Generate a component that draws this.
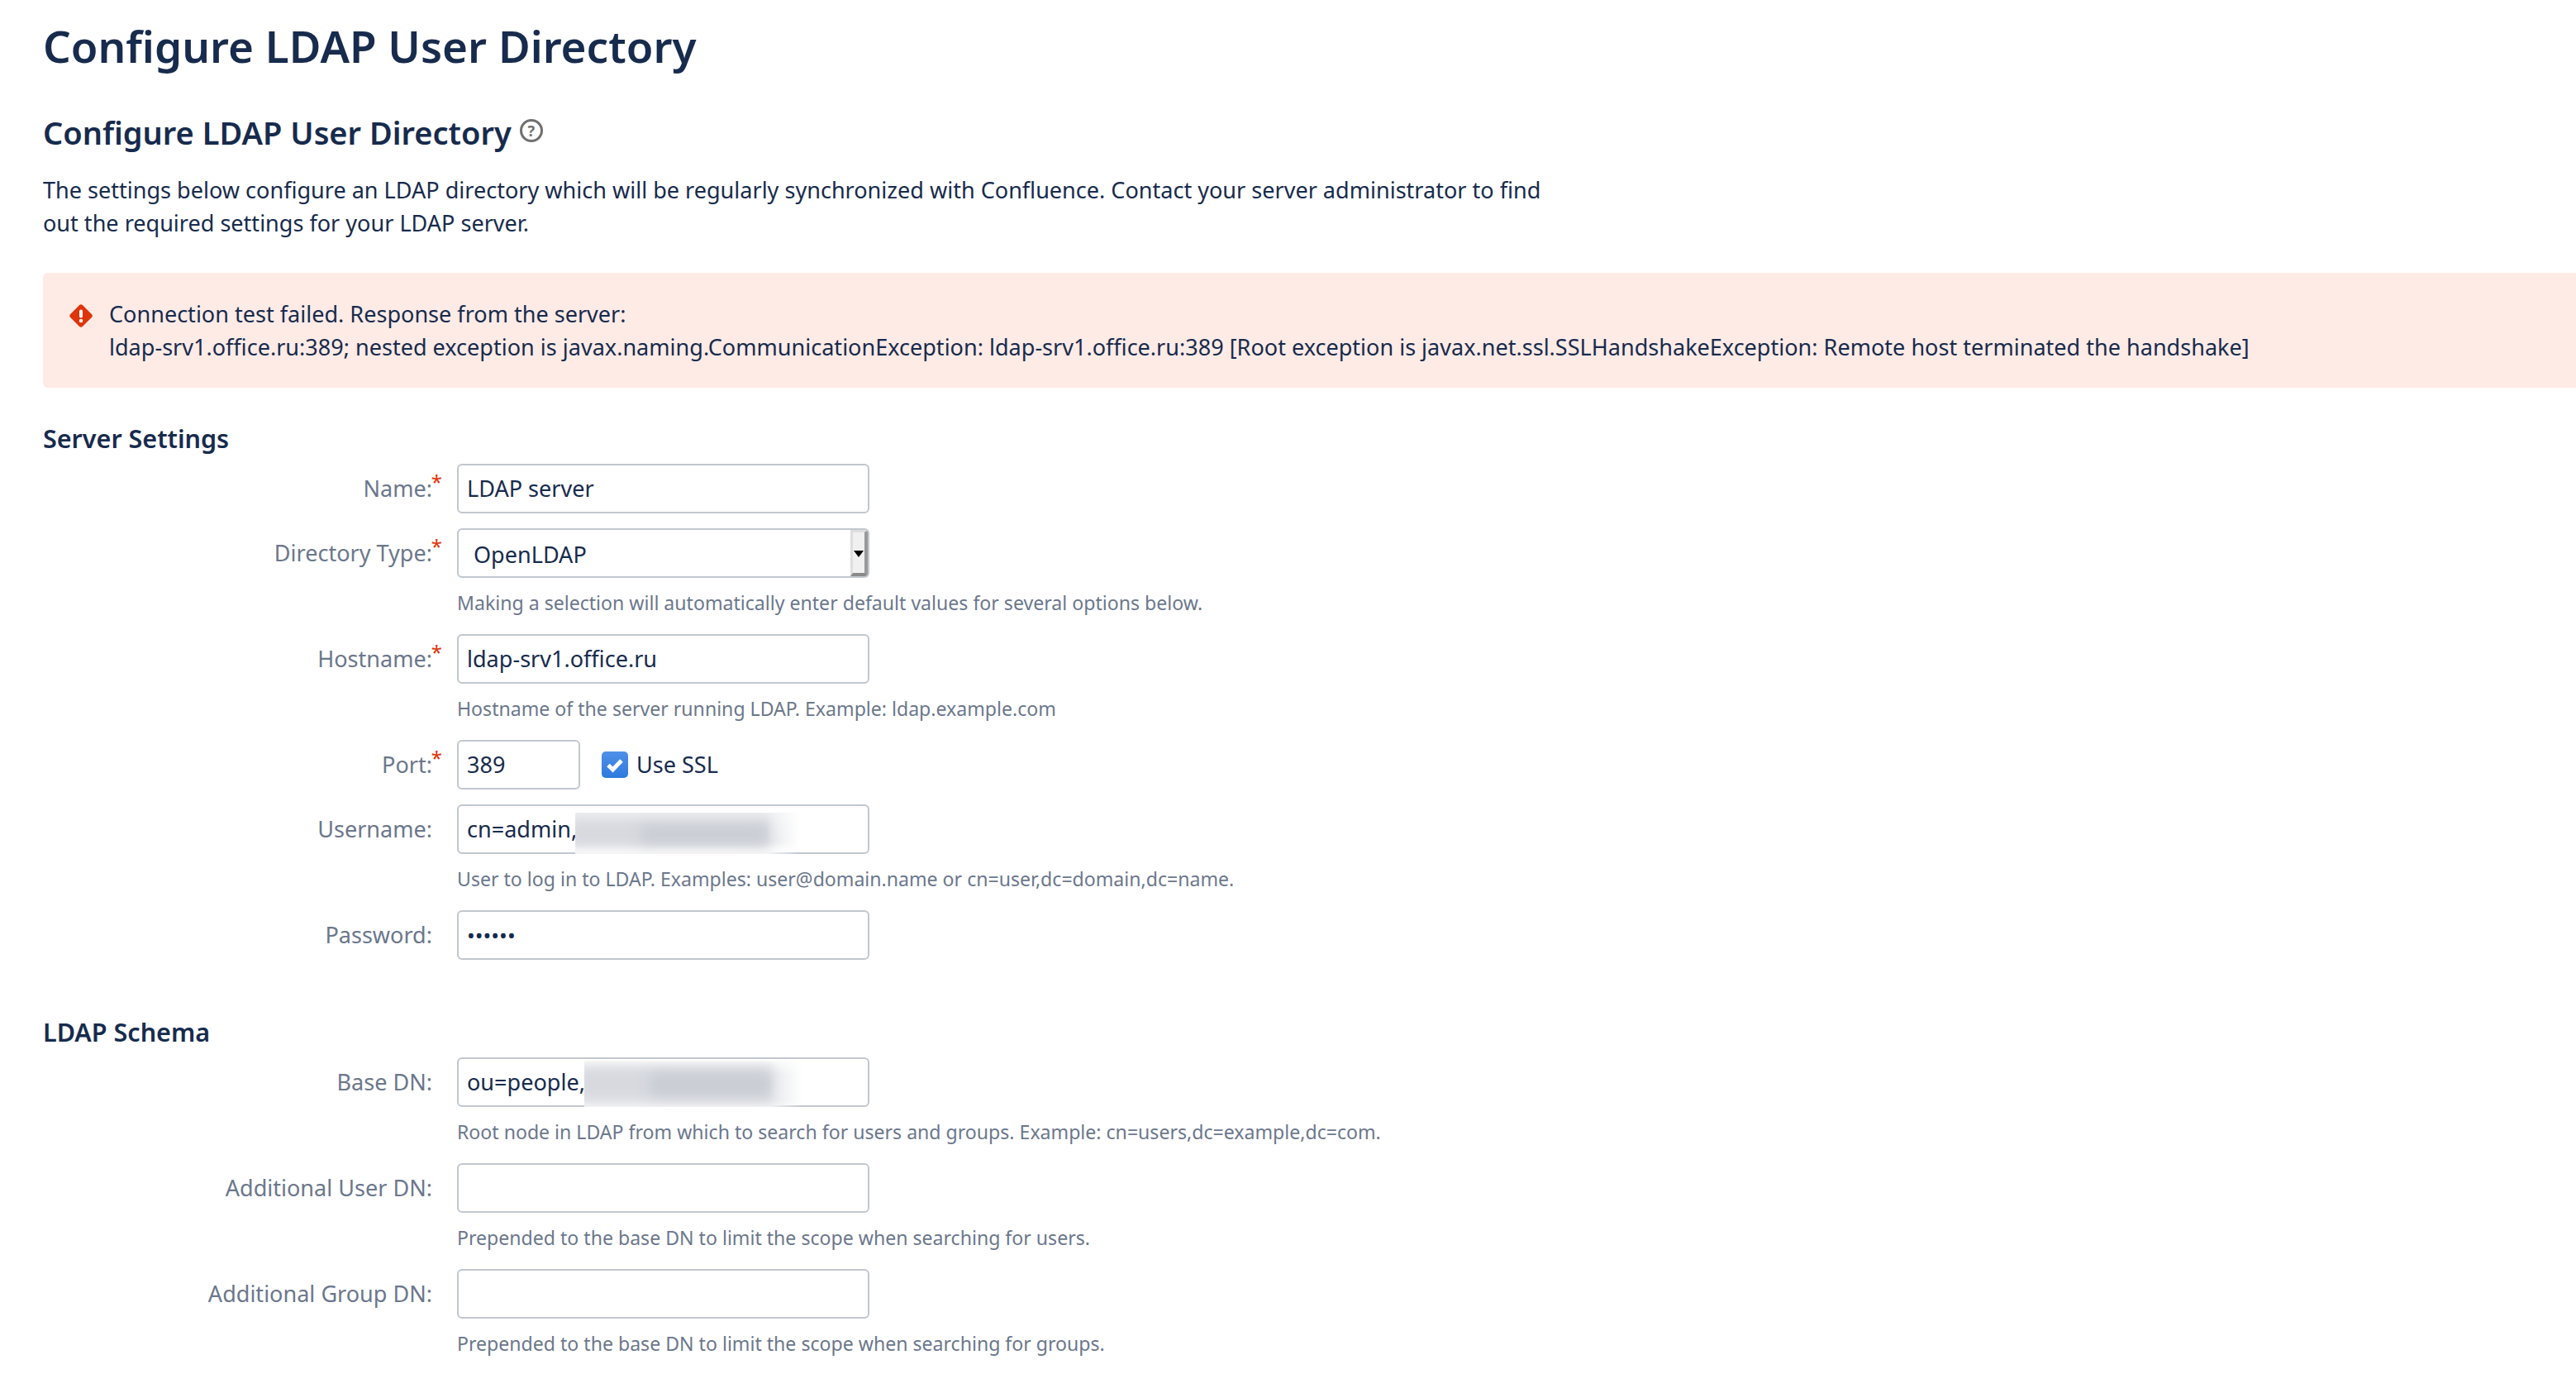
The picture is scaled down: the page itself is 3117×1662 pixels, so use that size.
<div class="page">
  <h1>Configure LDAP User Directory</h1>
  <h2>Configure LDAP User Directory <span class="help-icon">?</span></h2>
  <p class="intro">The settings below configure an LDAP directory which will be regularly synchronized with Confluence. Contact your server administrator to find out the required settings for your LDAP server.</p>

  <div class="alert">
    <svg class="alert-icon" viewBox="0 0 28 28" aria-hidden="true">
      <path d="M11.9 1.2a3 3 0 0 1 4.2 0l10.7 10.7a3 3 0 0 1 0 4.2L16.1 26.8a3 3 0 0 1-4.2 0L1.2 16.1a3 3 0 0 1 0-4.2z" fill="#de350b"/>
      <rect x="12" y="6.5" width="4" height="10" rx="2" fill="#fff"/>
      <circle cx="14" cy="20" r="2.2" fill="#fff"/>
    </svg>
    <div>
      <div>Connection test failed. Response from the server:</div>
      <div>ldap-srv1.office.ru:389; nested exception is javax.naming.CommunicationException: ldap-srv1.office.ru:389 [Root exception is javax.net.ssl.SSLHandshakeException: Remote host terminated the handshake]</div>
    </div>
  </div>

  <h3>Server Settings</h3>

  <div class="field">
    <div class="label">Name:<span class="req">*</span></div>
    <div class="box">LDAP server</div>
  </div>

  <div class="field">
    <div class="label">Directory Type:<span class="req">*</span></div>
    <div class="col">
      <div class="box select">OpenLDAP
        <span class="spin"><span class="arrow"></span></span>
      </div>
      <div class="help">Making a selection will automatically enter default values for several options below.</div>
    </div>
  </div>

  <div class="field">
    <div class="label">Hostname:<span class="req">*</span></div>
    <div class="col">
      <div class="box">ldap-srv1.office.ru</div>
      <div class="help">Hostname of the server running LDAP. Example: ldap.example.com</div>
    </div>
  </div>

  <div class="field">
    <div class="label">Port:<span class="req">*</span></div>
    <div class="box short">389</div>
    <span class="check"><svg viewBox="0 0 32 32" aria-hidden="true"><path d="M8 16.5l5.5 5.5L24 11" fill="none" stroke="#fff" stroke-width="5"/></svg></span>
    <span class="check-label">Use SSL</span>
  </div>

  <div class="field">
    <div class="label">Username:</div>
    <div class="col">
      <div class="box">cn=admin,<span class="redact user"><span class="smear"></span><span class="blob"></span></span></div>
      <div class="help">User to log in to LDAP. Examples: user@domain.name or cn=user,dc=domain,dc=name.</div>
    </div>
  </div>

  <div class="field">
    <div class="label">Password:</div>
    <div class="box dots">••••••</div>
  </div>

  <h3 class="second">LDAP Schema</h3>

  <div class="field">
    <div class="label">Base DN:</div>
    <div class="col">
      <div class="box">ou=people,<span class="redact base"><span class="smear"></span><span class="blob"></span></span></div>
      <div class="help">Root node in LDAP from which to search for users and groups. Example: cn=users,dc=example,dc=com.</div>
    </div>
  </div>

  <div class="field">
    <div class="label">Additional User DN:</div>
    <div class="col">
      <div class="box"></div>
      <div class="help">Prepended to the base DN to limit the scope when searching for users.</div>
    </div>
  </div>

  <div class="field">
    <div class="label">Additional Group DN:</div>
    <div class="col">
      <div class="box"></div>
      <div class="help">Prepended to the base DN to limit the scope when searching for groups.</div>
    </div>
  </div>
</div>

<style>
  :global(body) {
    margin: 0;
    background: #fff;
    overflow: hidden;
  }
  .page {
    box-sizing: border-box;
    height: 1662px;
    overflow: hidden;
    padding: 0 0 0 52px;
    font-family: "Noto Sans", sans-serif;
    font-size: 27.05px;
    line-height: 40px;
    color: #172b4d;
  }
  h1 {
    margin: 0;
    padding-top: 20px;
    height: 72px;
    font-size: 53px;
    line-height: 72px;
    font-weight: 600;
  }
  h2 {
    margin: 40px 0 0;
    height: 56px;
    font-size: 38px;
    line-height: 56px;
    font-weight: 600;
    display: flex;
    align-items: center;
    gap: 10px;
  }
  .help-icon {
    width: 22px;
    height: 22px;
    margin-top: -4px;
    border: 3px solid #707070;
    border-radius: 50%;
    color: #707070;
    font-size: 18px;
    line-height: 22px;
    font-weight: 700;
    text-align: center;
  }
  .intro {
    margin: 22px 0 0;
    width: 1830px;
  }
  .alert {
    margin-top: 40px;
    height: 139px;
    box-sizing: border-box;
    padding: 30px 32px;
    background: #ffebe6;
    border-radius: 6px 0 0 6px;
    display: flex;
    gap: 20px;
    white-space: nowrap;
  }
  .alert-icon {
    width: 28px;
    height: 28px;
    flex: none;
    margin-top: 8px;
  }
  h3 {
    margin: 41px 0 0;
    height: 40px;
    font-size: 30.5px;
    line-height: 40px;
    font-weight: 600;
  }
  h3.second {
    margin-top: 67px;
  }
  .field {
    display: flex;
    align-items: flex-start;
    margin-top: 18px;
  }
  h3 + .field {
    margin-top: 11px;
  }
  .label {
    width: 501px;
    flex: none;
    box-sizing: border-box;
    padding-right: 30px;
    text-align: right;
    color: #6b778c;
    line-height: 60px;
    position: relative;
  }
  .req {
    position: absolute;
    right: 18px;
    top: -8px;
    color: #de350b;
    font-size: 24px;
  }
  .box {
    box-sizing: border-box;
    width: 499px;
    height: 60px;
    border: 2px solid #c1c7d0;
    border-radius: 6px;
    padding: 0 10px;
    line-height: 56px;
    background: #fff;
    white-space: nowrap;
    position: relative;
  }
  .select {
    padding-left: 18px;
    line-height: 60px;
    overflow: hidden;
  }
  .spin {
    position: absolute;
    right: 0;
    top: 0;
    bottom: 0;
    width: 21px;
    background: #f0f0f0;
    border-left: 3px solid #dedede;
    border-top: 3px solid #dedede;
    border-right: 4px solid #999;
    border-bottom: 4px solid #8a8a8a;
    box-sizing: border-box;
  }
  .arrow {
    position: absolute;
    left: 1px;
    top: 22px;
    border: 6px solid transparent;
    border-top: 8px solid #000;
    border-bottom: 0;
  }
  .short {
    width: 149px;
  }
  .dots {
    font-size: 26px;
  }
  .check {
    width: 32px;
    height: 32px;
    margin: 14px 0 0 26px;
    border-radius: 5px;
    background: linear-gradient(#4f90e8, #2f7ade);
    flex: none;
  }
  .check svg {
    display: block;
    width: 32px;
    height: 32px;
  }
  .check-label {
    margin-left: 10px;
    line-height: 60px;
  }
  .help {
    margin-top: 12px;
    height: 38px;
    font-size: 23.1px;
    line-height: 37px;
    color: #6b778c;
    white-space: nowrap;
  }
  .redact {
    position: absolute;
    background: linear-gradient(#edeff1, #e4e6ea 70%, #f8f8f9 88%);
    overflow: hidden;
    mask-image: linear-gradient(to right, #000 85%, transparent);
  }
  .redact.user {
    left: 141px;
    top: 8px;
    width: 272px;
    height: 50px;
  }
  .redact.base {
    left: 152px;
    top: 2px;
    width: 264px;
    height: 56px;
    background: linear-gradient(#fafafb, #e6e8eb 30%, #e6e8eb 85%, #f3f4f5);
  }
  .smear {
    position: absolute;
    inset: 8px 36px 10px -6px;
    background: #d7d9df;
    filter: blur(7px);
  }
  .blob {
    position: absolute;
    left: 80px;
    right: 40px;
    top: 16px;
    bottom: 14px;
    background: #c8ccd3;
    filter: blur(8px);
  }
</style>
